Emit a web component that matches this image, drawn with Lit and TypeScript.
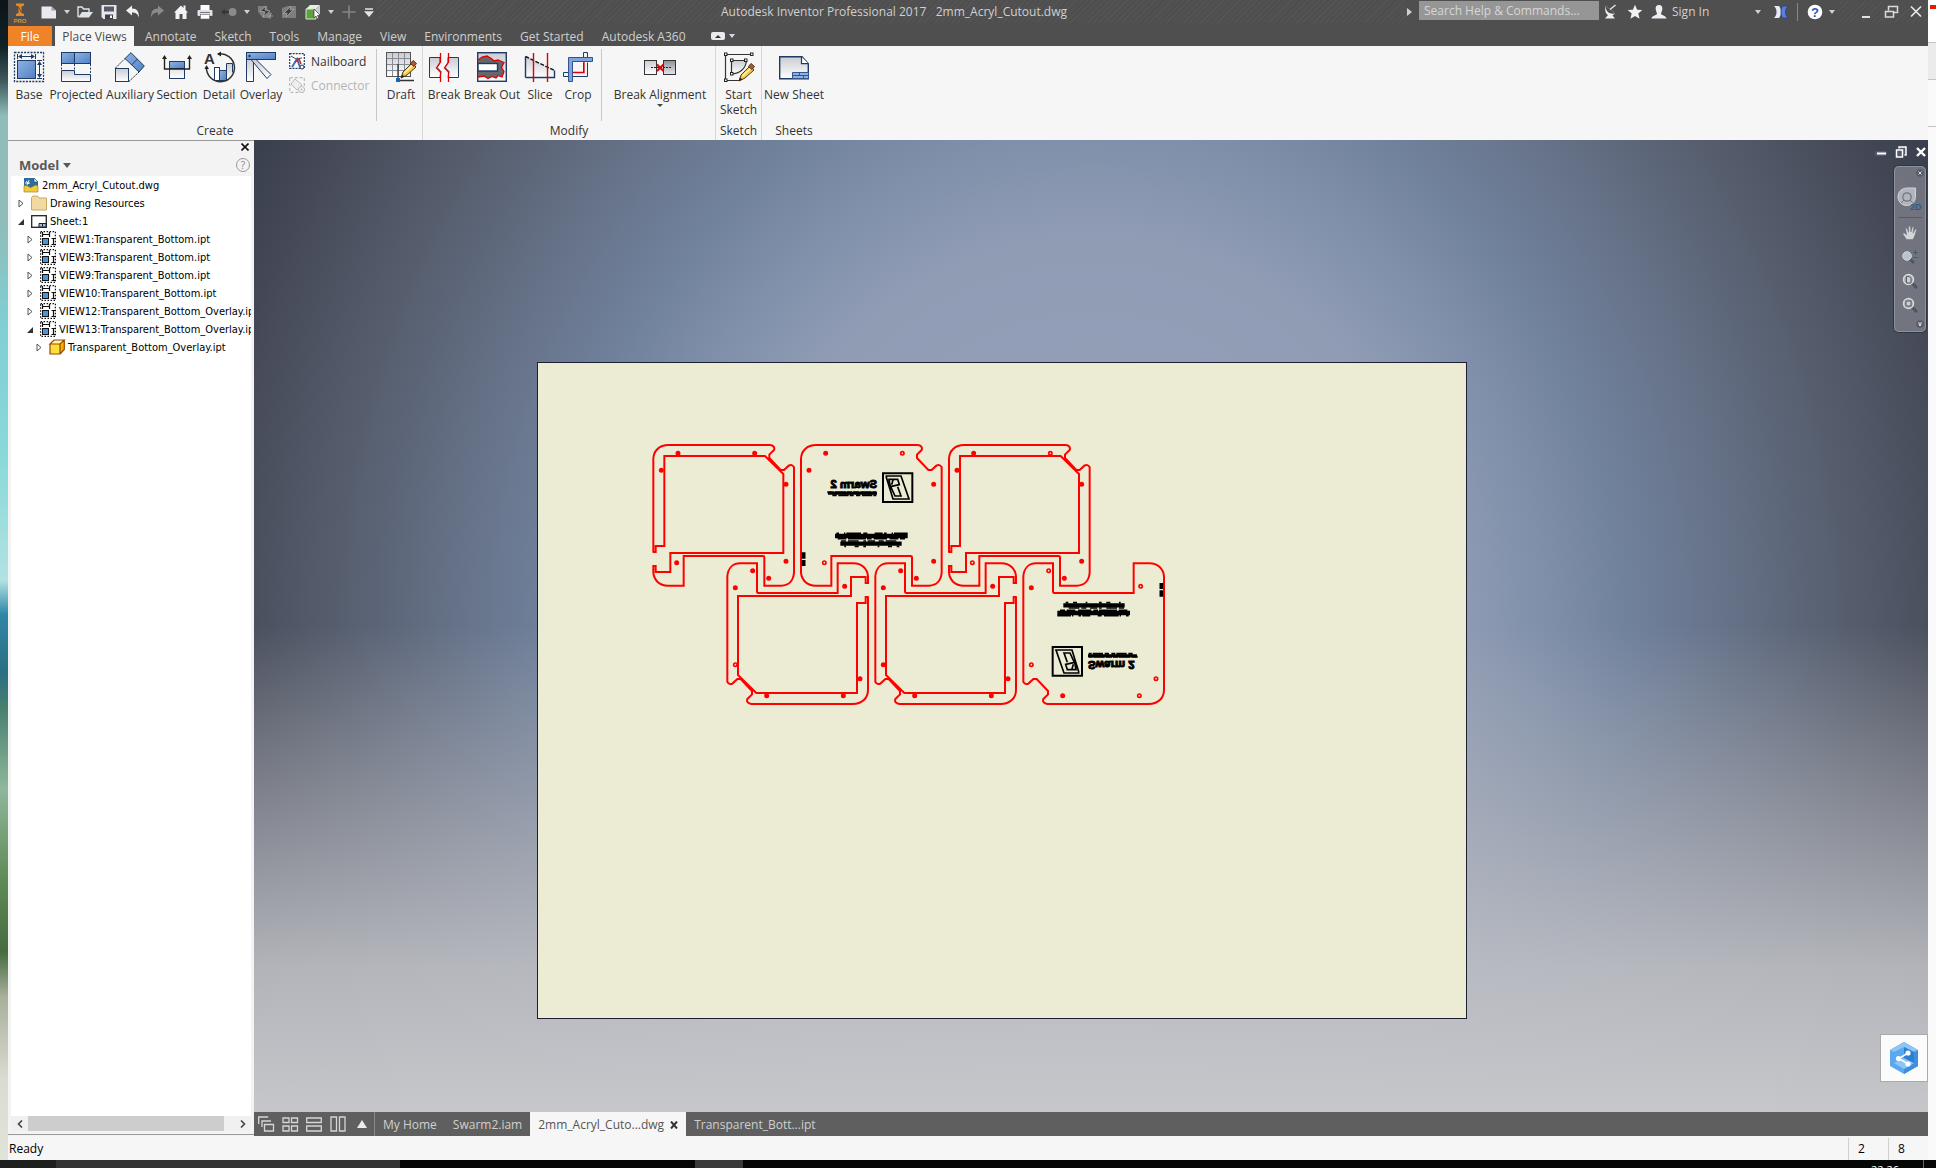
import { LitElement, html, svg, css, nothing } from "lit";
import { customElement, property } from "lit/decorators.js";

const NAVY = "#1f3a63";

const defs = svg`<defs>
  <linearGradient id="b" x1="0" y1="0" x2="1" y2="1"><stop offset="0" stop-color="#8fb4e3"/><stop offset="1" stop-color="#4f7fc4"/></linearGradient>
  <linearGradient id="g" x1="0" y1="0" x2="0" y2="1"><stop offset="0" stop-color="#c9ccd3"/><stop offset="1" stop-color="#ffffff"/></linearGradient>
  <linearGradient id="k" x1="0" y1="0" x2="0" y2="1"><stop offset="0" stop-color="#8d919b"/><stop offset="1" stop-color="#e4e6ea"/></linearGradient>
</defs>`;

const pencil = svg`<path d="M15 29l2-6L26 14l4 4-9 8z" fill="#f7c948" stroke="#4b3a1c"/><path d="M18.500 24L27 16" stroke="#fff2b8" stroke-width="1.500"/><path d="M24.500 14.500l2.500-3 3.500 3-2.500 3z" fill="#b5533c" stroke="#4b3a1c"/><path d="M15 29l1-3.500 2.500 2z" fill="#222"/>`;

const big: Record<string, unknown> = {
  base: svg`<rect x=".5" y=".5" width="29" height="29" fill="none" stroke="${NAVY}" stroke-width="1.300" stroke-dasharray="2 1.200"/><rect x="3.500" y="8.500" width="18" height="18" fill="url(#b)" stroke="${NAVY}"/><path d="M3.500 2v5M21.500 2v5M5 4.500h15M23 8.500h5M23 26.500h5M25.500 10v15" stroke="${NAVY}" fill="none"/><path d="M4 4.500l4-2.500v5zM21 4.500l-4-2.500v5zM25.500 9l-2.500 4h5zM25.500 26l-2.500-4h5z" fill="${NAVY}"/>`,
  projected: svg`<rect x=".5" y=".5" width="13" height="11" fill="url(#b)" stroke="${NAVY}"/><rect x="13.500" y=".5" width="16" height="11" fill="url(#b)" stroke="${NAVY}"/><path d="M.5 12v6M13.500 12v10M29.500 12v10" stroke="${NAVY}" stroke-dasharray="2 1.500"/><path d="M.5 18.500h13v4h16v7H.5z" fill="url(#g)" stroke="${NAVY}"/>`,
  auxiliary: svg`<rect x=".5" y="16.500" width="13" height="13" fill="url(#g)" stroke="${NAVY}"/><path d="M16 .7L29.300 14 24 20 10 6.500z" fill="url(#b)" stroke="${NAVY}"/><path d="M16.500 13L22.500 7" stroke="${NAVY}"/><path d="M.5 16L10 6.500M14 29.500L24 20" stroke="#222" stroke-dasharray="2 1"/>`,
  section: svg`<rect x="7.500" y="9.500" width="15" height="17" fill="url(#g)" stroke="${NAVY}"/><rect x="7.500" y="9.500" width="15" height="7" fill="url(#b)" stroke="${NAVY}"/><path d="M2.500 6v11h25V6" fill="none" stroke="#222" stroke-width="1.400"/><path d="M0 7l2.500-4L5 7zM25 7l2.500-4L30 7z" fill="#222"/>`,
  detail: svg`<rect x="10.500" y="15.500" width="5" height="13" fill="#fff" stroke="${NAVY}"/><rect x="15.500" y="18.500" width="7" height="10" fill="url(#b)" stroke="${NAVY}"/><path d="M22.500 27V11.500h6v9" fill="url(#g)" stroke="${NAVY}"/><path d="M14 2a14 14 0 1 1-11.500 13" fill="none" stroke="#333" stroke-width="1.500"/><path d="M13 2l4-2.500v5zM.5 17l2-4 2.500 4z" fill="#222"/><text x="0" y="11.500" font-family="Liberation Sans" font-weight="bold" font-size="15" fill="#333">A</text>`,
  overlay: svg`<path d="M.5 7.500h7v22h-7z" fill="url(#g)" stroke="${NAVY}"/><path d="M5 7.500L21 26.500l4-4L10 7.500z" fill="url(#g)" stroke="${NAVY}"/><rect x=".5" y=".5" width="29" height="7" fill="url(#b)" stroke="${NAVY}"/><circle cx="3.500" cy="4" r="1.200" fill="${NAVY}"/>`,
  draft: svg`<rect x=".5" y=".5" width="24" height="24" fill="url(#g)" stroke="#555"/><path d="M6.500 1v23M12.500 1v23M18.500 1v23M1 6.500h23M1 12.500h23M1 18.500h23" stroke="#888b93"/><path d="M12 12v15M12 28.500h16" stroke="#333" stroke-width="1.300"/><rect x="10" y="26" width="4" height="4" fill="#1366b8"/><g transform="translate(0 -3)">${pencil}</g>`,
  break: svg`<path d="M.5 5.500H11v5l-3 5 4 4-1 6H.5zM29.500 5.500H19v5l-3 5 4 4-1 6h10.500z" fill="url(#g)" stroke="${NAVY}"/><path d="M11.500 1v9l-4 6 4 4v10M19.500 1v9l-4 6 4 4v10" fill="none" stroke="#e00000" stroke-width="1.300"/>`,
  breakout: svg`<rect x=".7" y=".7" width="28.600" height="28.600" fill="url(#g)" stroke="${NAVY}" stroke-width="1.400"/><path d="M1 8L5 5 10 4 15 7 17 9 21 8 27 10.500 24.500 15.500 27 19.500 25 25 21 23.500 19 26 15 24.500 11 26.500 7 24 1 25z" fill="#66676d"/><path d="M1 8L5 5 10 4 15 7 17 9 21 8 27 10.500 24.500 15.500 27 19.500 25 25 21 23.500 19 26 15 24.500 11 26.500 7 24 1 25" fill="none" stroke="#e00000" stroke-width="1.300"/><rect x="1" y="11.500" width="19.500" height="7.500" fill="#fff" stroke="${NAVY}" stroke-width="1.400"/>`,
  slice: svg`<path d="M.5 25.500v-21l29 14v7z" fill="url(#g)"/><path d="M.5 25.500v-21M29.500 18.500v7H.5" fill="none" stroke="${NAVY}" stroke-width="1.400"/><path d="M.5 4.500l29 14" stroke="#111" stroke-width="1.400" stroke-dasharray="4 1.500"/><path d="M8.500 1v29M22.500 1v29" stroke="#e00000" stroke-width="1.400"/>`,
  crop: svg`<path d="M20.500 5V.5h4V5M20.500 10.500v10H10M24.500 10.500v14H10M5 24.500H.5v-4H5" fill="#f4f5f7" stroke="${NAVY}"/><path d="M21 10v10.500H10" fill="none" stroke="#e00000" stroke-width="1.300"/><path d="M5.500 29.500v-24h24v4h-20v20z" fill="#7fa3dc" stroke="#33548c"/>`,
  align: svg`<rect x=".5" y="8.500" width="12" height="14" fill="url(#g)" stroke="#333"/><rect x="19.500" y="8.500" width="12" height="14" fill="url(#k)" stroke="#333"/><path d="M7 15.500h20" stroke="#222" stroke-dasharray="2 1"/><path d="M13 12.500l6.500 6.500M19.500 12.500l-6.500 6.500" stroke="#d01010" stroke-width="2.200"/>`,
  sketch: svg`<path d="M1.500 28V2.500H28M1.500 28.500h14" fill="none" stroke="#333" stroke-width="1.200"/><path d="M7.500 22V8.500H22.500C22 16 16 22 7.500 22z" fill="url(#g)" stroke="#333" stroke-width="1.200"/><g fill="#fff" stroke="#222"><rect x=".5" y="1" width="2.500" height="2.500"/><rect x="26.500" y="1" width="2.500" height="2.500"/><rect x=".5" y="27" width="2.500" height="2.500"/><rect x="6.500" y="7" width="2.500" height="2.500"/><rect x="20.500" y="7" width="2.500" height="2.500"/><rect x="6.500" y="20.500" width="2.500" height="2.500"/></g>${pencil}`,
  sheet: svg`<path d="M.7 4.700H23l6.300 7v15H.7z" fill="url(#g)" stroke="${NAVY}" stroke-width="1.400"/><path d="M22.500 4.700v7h7" fill="#fff" stroke="${NAVY}" stroke-width="1.200"/><path d="M13.500 20.500h16v6h-16zM13.500 23.500h16M20.500 20.500v3M24.500 23.500v3" fill="#8fb0e0" stroke="#33548c"/>`,
};

const small: Record<string, unknown> = {
  nailboard: svg`<rect x=".7" y=".7" width="14.600" height="14.600" fill="#fff" stroke="${NAVY}" stroke-width="1.200" stroke-dasharray="2 1"/><path d="M2 3l5 3 6-1" stroke="#444" fill="none"/><path d="M3 14L8 6l3 8" stroke="#3b6fc0" stroke-width="2" fill="none"/><path d="M6 9l4-3 2 5" stroke="#d02020" fill="none" stroke-width="1.500"/><circle cx="13" cy="14" r="2" fill="#fff" stroke="${NAVY}"/>`,
  connector: svg`<rect x=".7" y=".7" width="14.600" height="14.600" fill="none" stroke="#bbb" stroke-width="1.200" stroke-dasharray="3 2"/><path d="M6 2l7 6-5 5-6-6z" fill="#eee" stroke="#bbb"/><circle cx="12.500" cy="12.500" r="3" fill="#f6f6f6" stroke="#bbb"/><circle cx="12.500" cy="12.500" r="1" fill="#bbb"/>`,
  new: svg`<path d="M.5 2.500h10l4.500 4v8H.5z" fill="#e8eaf0"/><path d="M10.500 2.500v4h4.500z" fill="#9a9ca6"/>`,
  open: svg`<path d="M1 13V3h4l1.500 2H12v3" fill="none" stroke="#dfe3ea" stroke-width="1.400"/><path d="M1 13.500L5 8h11l-4 5.500z" fill="#dfe3ea"/>`,
  save: svg`<path d="M.5 1h15v14H2.500L.5 13z" fill="#e6e8ee"/><rect x="3" y="2.500" width="10" height="5" fill="#575a66"/><rect x="4" y="10.500" width="8" height="4.500" fill="#3c3f4a"/><rect x="9" y="11.500" width="2" height="2.500" fill="#fff"/>`,
  undo: svg`<path d="M1 6.500L7 1.500v3c5 0 7 3 7 9-1.500-4-3.500-5-7-5v3z" fill="#eef0f4"/>`,
  redo: svg`<path d="M15 6.500L9 1.500v3c-5 0-7 3-7 9 1.500-4 3.500-5 7-5v3z" fill="#8b8b8b"/>`,
  home: svg`<path d="M1 8.500L8 1.500l2.500 2.500V1.500h2V6L15 8.500h-1.500v6.500h-4V10h-3v5h-4V8.500z" fill="#f2f3f6"/>`,
  print: svg`<rect x="3.500" y="1" width="9" height="5" fill="#fff"/><rect x=".5" y="6" width="15" height="6" rx="1" fill="#dfe2ea"/><path d="M3 8.500h10" stroke="#777"/><rect x="3.500" y="10.500" width="9" height="4.500" fill="#fff" stroke="#666" stroke-width=".6"/>`,
  back: svg`<circle cx="11.500" cy="8" r="4" fill="#8b8b8b"/><path d="M0 8l4-3v2h4v2H4v2z" fill="#353535"/>`,
  updateA: svg`<path d="M1 2h9l1 6 4 1-2 5H6L1 8z" fill="#7e7e7e"/><path d="M3 7l6-5-1 4 5 1-7 6 2-5z" fill="#3c3c3c" stroke="#a8a8a8" stroke-width=".8"/><path d="M13 9v6M10 12h6" stroke="#9a9a9a"/>`,
  updateB: svg`<path d="M1 4l6-2h8v12H1z" fill="#7e7e7e"/><path d="M2 10l8-8-1 4 4-1-8 8 1-4z" fill="#3c3c3c" stroke="#a8a8a8" stroke-width=".8"/>`,
  cube: svg`<path d="M1 5l4-4h10l-4 4z" fill="#e8eee4"/><path d="M1 5h10v10H1z" fill="#5da03d" stroke="#d5ead0"/><path d="M11 5l4-4v9l-4 4z" fill="#c9ccd0"/><path d="M9 5v9l2-2 1.500 3 1.500-1-1.500-2.500h3z" fill="#fff" stroke="#333" stroke-width=".7"/>`,
  plus: svg`<path d="M8 1.500v13M1.500 8h13" stroke="#858585" stroke-width="1.600"/>`,
  more: svg`<path d="M4 5h8M4.500 8h7l-3.500 4z" stroke="#e4e4e4" stroke-width="1.300" fill="#e4e4e4"/>`,
  dish: svg`<path d="M3 1.500C2 6 5 10.500 12 9.500L9.500 11.500 12 14.500H2l3-3.500C2 9 1.500 5 3 1.500z" fill="#eceef2"/><path d="M3 2l9 7.500" stroke="#777" stroke-width=".8"/><path d="M7 5.500L12.500 1" stroke="#e4e6ea" stroke-width="1.400"/>`,
  star: svg`<path d="M8 .8l2.100 4.900 5.200.4-4 3.500 1.300 5.200L8 12l-4.600 2.800 1.300-5.200-4-3.500 5.200-.4z" fill="#f2f3f5"/>`,
  user: svg`<path d="M8 1c2.500 0 3.800 1.800 3.300 4.500C11 7.500 10 8.500 10 10c1 1.500 5 1.500 5.500 4.500H.5C1 11.500 5 11.500 6 10c0-1.500-1-2.500-1.300-4.500C4.200 2.800 5.500 1 8 1z" fill="#eceef3"/>`,
  exchange: svg`<path d="M1 2h5c1.500 2 2 4 2 6s-.5 4-2 6H1c2-2 2.500-4 2.500-6S3 4 1 2z" fill="#e6ebf8"/><path d="M15 2h-5C8.500 4 8 6 8 8s.5 4 2 6h5c-2-2-2.500-4-2.500-6S13 4 15 2z" fill="#5a80e0" stroke="#24428c" stroke-width=".8"/>`,
  help: svg`<circle cx="8" cy="8" r="7.300" fill="#fff"/><text x="8" y="12.500" text-anchor="middle" font-family="Liberation Sans" font-weight="bold" font-size="13" fill="#2a5ac0">?</text>`,
  min: svg`<path d="M4 13h8" stroke="#e2e2e2" stroke-width="2"/>`,
  restore: svg`<path d="M5.500 6.500v-4h9v6h-4M2.500 7.500h8v5.500h-8z" fill="none" stroke="#dcdcdc" stroke-width="1.500"/>`,
  close: svg`<path d="M3 2.500l10 10M13 2.500l-10 10" stroke="#e8e8e8" stroke-width="1.700"/>`,
  cascade: svg`<path d="M.7 8V1h9.500M4 11V5h9M6.500 8.500h9v6.500h-9z" fill="none" stroke="#d6d6d6" stroke-width="1.300"/>`,
  grid: svg`<path d="M1 2h6v4.500H1zM9.500 2h6v4.500h-6zM1 10h6v5H1zM9.500 10h6v5h-6z" fill="none" stroke="#d6d6d6" stroke-width="1.300"/>`,
  rows: svg`<path d="M.7 2h14.600v4.500H.7zM.7 10h14.600v5H.7z" fill="none" stroke="#d6d6d6" stroke-width="1.300"/>`,
  cols: svg`<path d="M1 1h5.500v14H1zM9.500 1H15v14H9.500z" fill="none" stroke="#d6d6d6" stroke-width="1.300"/>`,
  up: svg`<path d="M3 12L8 4l5 8z" fill="#ececec"/>`,
  dwg: svg`<path d="M1 1h10l4 4v10H1z" fill="#2f6c9c"/><path d="M11 1v4h4z" fill="#e2eef6" stroke="#1e4d77" stroke-width=".6"/><path d="M3 4l3 3M6 3L4 8M2 6h5" stroke="#fff" stroke-width=".9"/><path d="M1 9c4-2 5 3 8 1 2-1 3-3 6-1v6H1z" fill="#f2cb3d" stroke="#9a7a12" stroke-width=".6"/>`,
  folder: svg`<path d="M.5 2.500L2 1h4.500L8 3h7.500v12H.5z" fill="#f2d8a2" stroke="#c9a864"/>`,
  page: svg`<rect x=".7" y="2.700" width="14.600" height="11.600" fill="#fff" stroke="#222" stroke-width="1.300"/><path d="M8 10.500h7v3.500H8z" fill="#9cc0ea" stroke="#222"/><path d="M11.500 10.500v3" stroke="#222"/>`,
  view: svg`<rect x=".6" y=".6" width="14.800" height="14.800" fill="#fff" stroke="#111" stroke-width="1.200" stroke-dasharray="1.500 1.500"/><path d="M2.500 1v5M9.500 1v5M2.500 3.500h7M11.500 7.500h4M11.500 13.500h4M13.500 7.500v6" stroke="#111" stroke-width="1.200" fill="none"/><rect x="2.500" y="7.500" width="6" height="6" fill="#4f94d6" stroke="#111"/>`,
  part: svg`<path d="M1 5l4-4h10.500L11 5z" fill="#fff3b0"/><path d="M11 5l4.500-4v9.500L11 15z" fill="#f0b400"/><path d="M1 5h10v10H1z" fill="#ffdf3d"/><path d="M1 5l4-4h10.300L11 5zM1 5v10h10V5M11 15l4.300-4.500V1" fill="none" stroke="#9a4a00" stroke-width="1.200"/>`,
};

@customElement("app-icon")
export class AppIcon extends LitElement {
  @property() name = "";
  @property({ type: Boolean }) large = false;
  static styles = css`
    :host { display: inline-flex; flex: none; }
    svg { display: block; overflow: visible; }
  `;
  render() {
    return this.large
      ? html`<svg width=${this.name === "align" ? 32 : 30} height="30" aria-hidden="true">${defs}${big[this.name]}</svg>`
      : html`<svg width="16" height="16" aria-hidden="true">${defs}${small[this.name]}</svg>`;
  }
}

type Tool = { icon: string; label: string; w: string; menu?: boolean };
const createTools: Tool[] = [
  { icon: "base", label: "Base", w: "w34" },
  { icon: "projected", label: "Projected", w: "w60" },
  { icon: "auxiliary", label: "Auxiliary", w: "w48" },
  { icon: "section", label: "Section", w: "w46" },
  { icon: "detail", label: "Detail", w: "w38" },
  { icon: "overlay", label: "Overlay", w: "w46" },
];
const modifyTools: Tool[] = [
  { icon: "break", label: "Break", w: "w38" },
  { icon: "breakout", label: "Break Out", w: "w58" },
  { icon: "slice", label: "Slice", w: "w38" },
  { icon: "crop", label: "Crop", w: "w38" },
];

const shared = css`
  * { box-sizing: border-box; }
  button, input { font: inherit; color: inherit; border: 0; padding: 0; margin: 0; background: none; }
  button { display: inline-flex; align-items: center; justify-content: center; white-space: nowrap; }
`;

@customElement("title-bar")
export class TitleBar extends LitElement {
  static styles = [shared, css`
    :host { display: block; height: 26px; background: #4f4f4f; color: #d0d0d0; }
    .bar { display: grid; grid-template-columns: auto 1fr auto; height: 23px; align-items: center; }
    .hatch { background: repeating-linear-gradient(135deg, #4f4f4f 0 3px, #555 3px 4px); }
    .quick, .right { display: flex; align-items: center; height: 100%; background: #4f4f4f; }
    .quick button { width: 24px; height: 22px; }
    .quick .drop { width: 12px; }
    .quick .more { width: 16px; }
    .logo { width: 29px; height: 22px; }
    .title { padding-left: 344px; white-space: pre; font-size: 12px; line-height: 23px; }
    .caret { border: 3px solid transparent; border-top: 4px solid #d0d0d0; border-bottom: 0; }
    .play { border: 4px solid transparent; border-left: 5px solid #d0d0d0; border-right: 0; margin-right: 7px; }
    .search { width: 180px; height: 19px; background: #969696; padding: 0 5px; margin-bottom: 2px; font-size: 12px; }
    .search::placeholder { color: #d6d6d6; opacity: 1; }
    .right button { width: 24px; height: 22px; }
    .right .sign { width: 122px; justify-content: flex-start; gap: 5px; padding: 0 8px 0 4px; }
    .sign .caret { margin-left: auto; }
    .sep { width: 1px; height: 18px; background: #888; margin: 0 6px 0 4px; }
    .right .wide { width: 34px; gap: 6px; }
    .win { display: flex; padding-left: 15px; }
    .win button { width: 25px; }
  `];
  render() {
    const q = (n: string, label: string) => html`<button aria-label=${label}><app-icon name=${n}></app-icon></button>`;
    const d = html`<button class="drop" aria-label="Options"><span class="caret"></span></button>`;
    return html`<div class="bar hatch">
      <div class="quick">
        <svg class="logo" viewBox="0 0 29 22" role="img" aria-label="Inventor Pro"><path d="M8 2.500h8v2l-2.500 1v6.500l2.500 1v2H8v-2l2.500-1V5.500L8 4.500z" fill="#e58a2c"/><path d="M10.500 5.500l3 6.500" stroke="#8a4d12"/><text x="12" y="22" text-anchor="middle" font-family="Liberation Sans" font-weight="bold" font-size="6" fill="#e58a2c">PRO</text></svg>
        ${q("new", "New")}${d}${q("open", "Open")}${q("save", "Save")}${q("undo", "Undo")}${q("redo", "Redo")}${q("home", "Home")}${q("print", "Print")}${q("back", "Return")}${d}${q("updateA", "Update")}${q("updateB", "Update all")}${q("cube", "Material")}${d}${q("plus", "Add")}
        <button class="more" aria-label="Customize"><app-icon name="more"></app-icon></button>
      </div>
      <div class="title">Autodesk Inventor Professional 2017   2mm_Acryl_Cutout.dwg</div>
      <div class="right">
        <span class="play"></span>
        <input class="search" aria-label="Search" placeholder="Search Help &amp; Commands..." />
        ${q("dish", "Communication center")}${q("star", "Favorites")}
        <button class="sign"><app-icon name="user"></app-icon>Sign In<span class="caret"></span></button>
        ${q("exchange", "Exchange apps")}
        <span class="sep"></span>
        <button class="wide" aria-label="Help"><app-icon name="help"></app-icon><span class="caret"></span></button>
        <div class="win hatch">${q("min", "Minimize")}${q("restore", "Restore")}${q("close", "Close")}</div>
      </div>
    </div>`;
  }
}

@customElement("ribbon-bar")
export class RibbonBar extends LitElement {
  static styles = [shared, css`
    :host { display: block; font-size: 12px; color: #333; }
    .tabs { display: flex; height: 20px; background: #4f4f4f; color: #cfcfcf; padding: 0; }
    .tabs button { padding: 0 9px; height: 20px; }
    .tabs .file { background: #f08228; color: #fff; width: 44px; margin-right: 3px; padding: 0; }
    .tabs .on { background: #f6f6f6; color: #4a4a4a; width: 79px; padding: 0; margin-right: 2px; }
    .tabs .mini { padding: 0 0 0 16px; gap: 4px; }
    .pill { width: 14px; height: 8px; border-radius: 2px; background: #e8eaee; display: grid; place-items: center; }
    .pill::after { content: ""; border: 3px solid transparent; border-bottom: 3px solid #333; border-top: 0; }
    .caret { border: 3px solid transparent; border-top: 4px solid #d8d8e4; border-bottom: 0; }
    .ribbon { display: flex; height: 94px; background: #f6f6f6; }
    .panel { display: grid; grid-template-rows: 1fr 18px; border-right: 1px solid #d8d8d8; }
    .panel.last { border: 0; }
    .title { text-align: center; line-height: 18px; }
    .row { display: flex; padding: 6px 2px 0; }
    .row.start { padding-left: 4px; }
    .tool { flex-direction: column; justify-content: flex-start; gap: 5px; line-height: 15px; height: 66px; }
    .tool span { white-space: pre; }
    .tool .arrow { border: 3px solid transparent; border-top: 3px solid #444; border-bottom: 0; margin-top: -3px; }
    .w34 { width: 34px; } .w38 { width: 38px; } .w41 { width: 41px; } .w46 { width: 46px; } .w48 { width: 48px; }
    .w58 { width: 58px; } .w60 { width: 60px; } .w106 { width: 106px; }
    .stack { display: flex; flex-direction: column; gap: 8px; width: 92px; padding: 1px 0 0 5px; align-items: flex-start; }
    .stack button { gap: 6px; height: 16px; }
    .stack button:disabled { color: #b4b4b4; }
    .rule { width: 1px; height: 72px; background: #c8c8c8; margin: -3px 5px 0 0; }
    .rule.m { margin-left: 4px; }
  `];
  tool(t: Tool) {
    return html`<button class="tool ${t.w}"><app-icon large name=${t.icon}></app-icon><span>${t.label}</span>${t.menu ? html`<i class="arrow"></i>` : nothing}</button>`;
  }
  render() {
    return html`
      <div class="tabs">
        <button class="file">File</button><button class="on">Place Views</button>
        ${["Annotate", "Sketch", "Tools", "Manage", "View", "Environments", "Get Started", "Autodesk A360"].map((t) => html`<button>${t}</button>`)}
        <button class="mini" aria-label="Minimize ribbon"><span class="pill"></span><span class="caret"></span></button>
      </div>
      <div class="ribbon">
        <section class="panel">
          <div class="row start">
            ${createTools.map((t) => this.tool(t))}
            <div class="stack">
              <button><app-icon name="nailboard"></app-icon>Nailboard</button>
              <button disabled><app-icon name="connector"></app-icon>Connector</button>
            </div>
            <span class="rule"></span>
            ${this.tool({ icon: "draft", label: "Draft", w: "w38" })}
          </div>
          <div class="title">Create</div>
        </section>
        <section class="panel">
          <div class="row">
            ${modifyTools.map((t) => this.tool(t))}
            <span class="rule m"></span>
            ${this.tool({ icon: "align", label: "Break Alignment", w: "w106", menu: true })}
          </div>
          <div class="title">Modify</div>
        </section>
        <section class="panel">
          <div class="row">${this.tool({ icon: "sketch", label: "Start\nSketch", w: "w41" })}</div>
          <div class="title">Sketch</div>
        </section>
        <section class="panel last">
          <div class="row">${this.tool({ icon: "sheet", label: "New Sheet", w: "w60" })}</div>
          <div class="title">Sheets</div>
        </section>
      </div>`;
  }
}

type Node = { level: number; icon: string; label: string; state: "open" | "closed" | "leaf" };
const nodes: Node[] = [
  { level: 0, icon: "dwg", label: "2mm_Acryl_Cutout.dwg", state: "leaf" },
  { level: 1, icon: "folder", label: "Drawing Resources", state: "closed" },
  { level: 1, icon: "page", label: "Sheet:1", state: "open" },
  ...["VIEW1:Transparent_Bottom.ipt", "VIEW3:Transparent_Bottom.ipt", "VIEW9:Transparent_Bottom.ipt", "VIEW10:Transparent_Bottom.ipt", "VIEW12:Transparent_Bottom_Overlay.ipt"].map(
    (label): Node => ({ level: 2, icon: "view", label, state: "closed" })),
  { level: 2, icon: "view", label: "VIEW13:Transparent_Bottom_Overlay.ipt", state: "open" },
  { level: 3, icon: "part", label: "Transparent_Bottom_Overlay.ipt", state: "closed" },
];

@customElement("model-browser")
export class ModelBrowser extends LitElement {
  static styles = [shared, css`
    :host { display: flex; flex-direction: column; background: #f3f3f3; border-top: 1px solid #9a9a9a; padding: 0 3px 0 3px; font-size: 11px; color: #000; min-width: 0; }
    header { height: 35px; display: grid; grid-template: 12px 23px / 1fr auto; padding: 0 1px 0 8px; }
    .x { grid-column: 2; justify-self: end; width: 10px; height: 12px; }
    .model { grid-row: 2; justify-self: start; font: bold 13px/18px "Open Sans", "Noto Sans", sans-serif; color: #5a5a5a; gap: 4px; height: 24px; }
    .model i { border: 4px solid transparent; border-top: 5px solid #5a5a5a; border-bottom: 0; }
    .help { grid-row: 2; grid-column: 2; width: 14px; height: 14px; border: 1px solid #999; border-radius: 50%; color: #888; font-size: 10px; align-self: center; }
    ul { flex: 1; margin: 0; padding: 0; list-style: none; background: #fff; overflow: hidden; font-family: "DejaVu Sans Condensed", "DejaVu Sans", sans-serif; }
    li { display: flex; align-items: center; height: 18px; white-space: nowrap; }
    li > * { flex: none; }
    .l1 { padding-left: 4px; } .l2 { padding-left: 13px; } .l3 { padding-left: 22px; }
    .tw { width: 11px; height: 18px; margin-right: 5px; }
    .l0 .tw { width: 7px; }
    li app-icon { margin-right: 3px; }
    .scroll { display: flex; height: 15px; align-items: stretch; background: #f0f0f0; }
    .scroll button { width: 17px; }
    .scroll .thumb { flex: 1; background: #cdcdcd; margin-right: 10px; }
    .foot { height: 4px; border-bottom: 1px solid #999; margin: 0 -3px 1px; }
  `];
  render() {
    return html`
      <header>
        <button class="x" aria-label="Close panel"><svg width="8" height="8"><path d="M.5.5l7 7M7.500.5l-7 7" stroke="#111" stroke-width="1.600"/></svg></button>
        <button class="model">Model<i></i></button>
        <button class="help" aria-label="Help">?</button>
      </header>
      <ul>${nodes.map((n) => html`<li class="l${n.level}">
        ${n.state === "leaf" ? html`<span class="tw"></span>` : html`<button class="tw" aria-label="Toggle ${n.label}"><svg width="8" height="9">${n.state === "open" ? svg`<path d="M7 2v6H1z" fill="#333"/>` : svg`<path d="M2 1l4 3.500-4 3.500z" fill="#fff" stroke="#555"/>`}</svg></button>`}
        <app-icon name=${n.icon}></app-icon><span>${n.label}</span></li>`)}</ul>
      <div class="scroll">
        <button aria-label="Scroll left"><svg width="6" height="8"><path d="M5 .5L1.500 4 5 7.500" fill="none" stroke="#444" stroke-width="1.600"/></svg></button>
        <span class="thumb"></span>
        <button aria-label="Scroll right"><svg width="6" height="8"><path d="M1 .5L4.500 4 1 7.500" fill="none" stroke="#444" stroke-width="1.600"/></svg></button>
      </div>
      <div class="foot"></div>`;
  }
}

/* Part geometry is in thirds of a pixel; the red lines are cut paths, the black ones engraving. */
const hook = "C40 62 58 45 86 45H390Q403 47 403 56L402 60 388 74V84L422 120H432L446 107Q456 101 462 112V428C460 452 446 467 424 467H373V382Q373 378 369 378H131V467H84C58 467 42 450 40 428";
const framePath = `M40 368V88${hook}V408H47V426H91V369H430V132L375 78H73V348H47V366H40`;
const platePath = `M40 428V88${hook}`;
const holes = [[114, 70], [344, 70], [64, 121], [438, 163], [438, 394], [386, 445], [110, 398]];

const part = (path: string, transform: string, open: number[], extra: unknown = nothing) => svg`<g transform=${transform}>
  <path d=${path} fill="none" stroke="#f00" stroke-width="6"/>
  ${holes.map(([x, y], i) => svg`<circle cx=${x} cy=${y} r="5" fill=${open.includes(i) ? "none" : "#f00"} stroke="#f00" stroke-width="5"/>`)}
  ${extra}</g>`;

const engraving = svg`<g stroke="#000" fill="none" stroke-width="6">
  <path d="M286 130H374V216H286z"/>
  <path d="M296 138H340L364 207H316L296 142zM304 148H330L335 164 308 170zM309 170L322 198H340L330 170M316 150L312 164" stroke-width="5"/>
  <g transform="translate(268 174) scale(-1 1)"><text x="0" y="0" font-family="Liberation Sans" font-weight="bold" font-size="34" fill="#000" stroke-width="3">Swarm 2</text></g>
  <path d="M121 190H268" stroke-width="9"/><path d="M119 187H266" stroke-width="6" stroke-dasharray="19 3 34 2 16 3"/><path d="M134 196H266" stroke-width="6" stroke-dasharray="13 5 31 3 12 7"/>
  <path d="M142 318H360" stroke-width="13"/><path d="M146 310H360" stroke-width="5" stroke-dasharray="8 15 4 3 44 7 12 22 24 4"/><path d="M150 326H352" stroke-width="5" stroke-dasharray="26 5 54 3 14 6 40 8"/>
  <path d="M158 341H342" stroke-width="13"/><path d="M160 333H340" stroke-width="5" stroke-dasharray="15 6 32 14 8 5 22 11"/><path d="M170 349H340" stroke-width="5" stroke-dasharray="5 26 12 14 8 35"/>
  <path d="M48 367V386M48 390V408" stroke-width="11"/></g>`;

@customElement("drawing-view")
export class DrawingView extends LitElement {
  static styles = [shared, css`
    :host { display: block; position: relative; overflow: hidden;
      background:
        linear-gradient(180deg, rgba(190,191,196,0) 50%, rgba(184,185,191,.5) 68%, rgba(190,191,196,.9) 85%, #c6c7cb 100%),
        radial-gradient(ellipse 54% 105% at 50% 52%, #98a4bd 0, #909cb4 40%, #8090aa 50%, #71829d 59%, #636e83 73%, #535a69 86%, #444856 98%, #343b49 108%); }
    .sheet { position: absolute; left: 283px; top: 222px; width: 930px; height: 657px; background: #ececd5; border: 1px solid #1d2030; }
    .sheet svg { position: absolute; left: 102px; top: 67px; overflow: visible; }
    .win { position: absolute; right: 0; top: 4px; display: flex; gap: 5px; }
    .win button { width: 15px; height: 15px; }
    .nav { position: absolute; right: 2px; top: 26px; width: 32px; height: 166px; border-radius: 5px; background: rgba(125,128,138,.8); box-shadow: 0 0 0 1px #2f3542, inset 0 0 0 1px #8e929c; display: flex; flex-direction: column; align-items: center; }
    .nav button { width: 32px; height: 24px; }
    .nav .tiny { height: 14px; justify-content: flex-end; padding-right: 2px; }
    .nav .wheel { height: 37px; }
    .nav hr { width: 24px; border: 0; border-top: 1px solid #555a66; margin: 0 0 3px; }
    .share { position: absolute; right: 0; bottom: 30px; width: 48px; height: 48px; background: #fbfbfb; border: 1px solid #aaa; }
  `];
  render() {
    const turn = (x: number) => `translate(${x} 867) rotate(180)`;
    const lens = (inner: unknown) => svg`<path d="M10 10l5 5" stroke="#4f545e" stroke-width="3"/><circle cx="6.500" cy="6.500" r="5" fill="#9ea6ab" stroke="#d4d9dc" stroke-width="1.500"/>${inner}`;
    return html`
      <div class="sheet"><svg width="530" height="290" viewBox="0 0 1590 870">
        ${part(framePath, "translate(0 0)", [])}
        ${part(platePath, "translate(443 0)", [1, 6], engraving)}
        ${part(framePath, "translate(887 0)", [1, 6])}
        ${part(framePath, turn(724), [3])}
        ${part(framePath, turn(1168), [])}
        ${part(platePath, turn(1612), [0, 2, 3, 5, 6], engraving)}
      </svg></div>
      <div class="win">
        <button aria-label="Minimize view"><svg width="14" height="14"><rect x="1" y="6" width="12" height="5" rx="2" fill="#555b68"/><path d="M3 8.500h9" stroke="#fff" stroke-width="2"/></svg></button>
        <button aria-label="Restore view"><svg width="14" height="14"><path d="M5 3.500V2h7v8h-1.500M2.500 5h6v7h-6z" fill="#555b68" stroke="#fff" stroke-width="1.500"/></svg></button>
        <button aria-label="Close view"><svg width="14" height="14"><path d="M3 3l8 8M11 3l-8 8" stroke="#fff" stroke-width="2.400"/></svg></button>
      </div>
      <div class="nav">
        <button class="tiny" aria-label="Close navigation"><svg width="8" height="8"><circle cx="4" cy="4" r="3.800" fill="#565b66"/><path d="M2.500 2.500l3 3M5.500 2.500l-3 3" stroke="#ddd"/></svg></button>
        <button class="wheel" aria-label="Navigation wheel"><svg width="26" height="24"><path d="M10 1h8.500v9.500A8.800 8.800 0 1 1 10 1z" fill="#b2b5bc" stroke="#d0d3d8"/><circle cx="10" cy="10" r="4.200" fill="none" stroke="#70757f" stroke-width="1.300"/><path d="M7 13l-3 3M13 13l3 3" stroke="#70757f"/><text x="13" y="23" font-family="Liberation Sans" font-weight="bold" font-size="9" fill="#2f5c92">2D</text></svg></button>
        <hr />
        <button aria-label="Pan"><svg width="16" height="16"><path d="M4.500 14.500L.8 9 2 7.800l2.600 2L3.500 3.500 5 3l1.500 4.300L6.700 1h1.600l.6 6 1.500-5.200 1.500.3-.8 6 2.200-4 1.300.6-1.900 6.300-1.700 3.500z" fill="#d2d7da" stroke="#666b75" stroke-width=".5"/></svg></button>
        <button aria-label="Zoom"><svg width="18" height="16"><path d="M9 10l4 4" stroke="#4f545e" stroke-width="2.500"/><circle cx="6" cy="7" r="4.300" fill="#b9c4c6" stroke="#d4d9dc"/><path d="M12 3.500h5M14.500 1v5M12 8.500h5" stroke="#555b66" stroke-width="1.200"/></svg></button>
        <button aria-label="Zoom sheet"><svg width="16" height="16">${lens(svg`<path d="M4.500 3.500h2.500l2 2v4.500H4.500z" fill="#cbd0d3" stroke="#565b66"/>`)}</svg></button>
        <button aria-label="Zoom selected"><svg width="16" height="16">${lens(svg`<rect x="4" y="4" width="5" height="5" fill="#cbd0d3" stroke="#565b66"/>`)}</svg></button>
        <button class="tiny" aria-label="Navigation options"><svg width="8" height="8"><circle cx="4" cy="4" r="3.800" fill="#565b66"/><path d="M2 3h4M3 4.500h2l-1 1.500z" stroke="#ddd" fill="#ddd"/></svg></button>
      </div>
      <button class="share" aria-label="Share"><svg width="28" height="32"><path d="M14 0l14 8v16l-14 8-14-8V8z" fill="#5aa9ee"/><path d="M14 0l14 8-4 2-10-5-10 5-4-2z" fill="#8cc6f6"/><path d="M28 8v16l-14 8v-5l10-6V10z" fill="#3f8fdc"/><path d="M4 21l10-5 10 5-10 6z" fill="#8cc6f6"/><path d="M14 5l10 5v11l-10-5z" fill="#2f7fd0"/><path d="M18 11L9 16.500 18 22" stroke="#fff" stroke-width="1.500" fill="none"/><circle cx="18" cy="11" r="2.600" fill="#fff"/><circle cx="8.500" cy="16.500" r="2.600" fill="#fff"/><circle cx="18" cy="22" r="2.600" fill="#fff"/></svg></button>`;
  }
}

@customElement("app-root")
export class AppRoot extends LitElement {
  static styles = [shared, css`
    :host { display: grid; grid-template-columns: 8px minmax(0, 1fr) 8px; grid-template-rows: minmax(0, 1fr) 8px; height: 100vh; font: 12px "Open Sans", "Noto Sans", sans-serif; overflow: hidden; }
    .wall { background: linear-gradient(180deg, #0c1518 0, #0f2226 4%, #3f5a5e 7%, #8fbdb9 10%, #8fbdb9 19%, #7fcfd4 28%, #8adada 40%, #b2e2e2 50%, #2f86a8 53%, #2b6f82 58%, #47806f 61%, #8fb79b 68%, #5f8a55 76%, #466b40 82%, #a9b09b 86%, #d9dcd0 93%, #e0e4d8 100%); }
    .window { display: grid; grid-template-rows: auto auto minmax(0, 1fr) 24px; }
    .work { display: grid; grid-template-columns: 246px minmax(0, 1fr); min-height: 0; }
    .stage { display: grid; grid-template-rows: minmax(0, 1fr) 24px; }
    .docs { display: flex; background: #5f5f5f; color: #cfcfcf; line-height: 24px; }
    .docs .ic { width: 24px; height: 24px; }
    .docs .tab { padding: 1px 8px 0; }
    .docs .first { border-left: 1px solid #8a8a8a; }
    .docs .on { background: #f6f6f6; color: #555; gap: 6px; min-width: 155px; }
    .status { display: flex; background: #f6f6f6; color: #000; padding-left: 1px; }
    .status .msg { flex: 1; line-height: 26px; }
    .status .num { border-left: 1px solid #d0d0d0; width: 40px; padding-left: 9px; line-height: 22px; margin-top: 2px; }
    .behind { background: linear-gradient(#fff 0 42px, #c4c4c4 42px 43px, #ebebeb 43px 79px, #c4c4c4 79px 80px, #fafafa 80px 126px, #c4c4c4 126px 127px, #fafafa 127px); padding-top: 5px; }
    .behind i { display: block; height: 4px; margin-left: 2px; background: #e21c00; }
    .taskbar { grid-column: 1 / -1; display: flex; background: #050706; color: #fff; overflow: hidden; }
    .a { width: 56px; background: #1d201c; } .b { width: 344px; background: #333; } .c { width: 295px; } .d { width: 48px; background: #3a3a3a; }
    .clock { margin-left: auto; padding: 2px 24px 0 0; line-height: 16px; font-size: 11px; border-right: 1px solid #666; margin-right: 12px; height: 8px; }
  `];
  render() {
    const ic = (n: string, l: string) => html`<button class="ic" aria-label=${l}><app-icon name=${n}></app-icon></button>`;
    return html`
      <div class="wall"></div>
      <main class="window">
        <title-bar></title-bar>
        <ribbon-bar></ribbon-bar>
        <div class="work">
          <model-browser></model-browser>
          <div class="stage">
            <drawing-view></drawing-view>
            <nav class="docs">
              ${ic("cascade", "Cascade")}${ic("grid", "Arrange")}${ic("rows", "Tile horizontally")}${ic("cols", "Tile vertically")}${ic("up", "More")}
              <button class="tab first">My Home</button>
              <button class="tab">Swarm2.iam</button>
              <button class="tab on">2mm_Acryl_Cuto...dwg<svg width="8" height="8"><path d="M1 .5l6 7M7 .5l-6 7" stroke="#333" stroke-width="2"/></svg></button>
              <button class="tab">Transparent_Bott...ipt</button>
            </nav>
          </div>
        </div>
        <footer class="status"><span class="msg">Ready</span><span class="num">2</span><span class="num">8</span></footer>
      </main>
      <div class="behind"><i></i></div>
      <div class="taskbar"><span class="a"></span><span class="b"></span><span class="c"></span><span class="d"></span><span class="clock">22:26</span></div>`;
  }
}
